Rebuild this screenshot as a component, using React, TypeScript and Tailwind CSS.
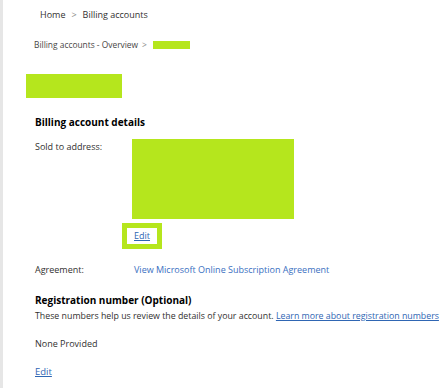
import React from 'react';

const font = { fontFamily: '"Open Sans", "Noto Sans", sans-serif' };

export default function App() {
  return (
    <div className="flex h-[388px] w-[443px] overflow-hidden bg-white text-[#323130]" style={font}>
      <div className="w-[3px] shrink-0 bg-[#e6e6e6]" />
      <div className="flex-1 pl-[23px]">
        {/* breadcrumb */}
        <div className="mt-[8px] flex items-center pl-[14px] text-[9px] leading-[14px] text-[#323130]">
          <span>Home</span>
          <span className="mx-[6px] text-[#8a8886]">&gt;</span>
          <span>Billing accounts</span>
        </div>
        <div className="mt-[16px] flex items-center pl-[8px] text-[8.4px] leading-[14px] text-[#484644]">
          <span>Billing accounts - Overview</span>
          <span className="ml-[4px] text-[#8a8886]">&gt;</span>
          <span className="ml-[6px] h-[8px] w-[37px] bg-[#b5e61d]" />
        </div>
        <div className="mt-[22px] h-[24px] w-[96px] bg-[#b5e61d]" />

        <div className="pl-[9px]">
          <div className="mt-[17px] text-[10px] font-bold leading-[14px] text-black">Billing account details</div>
          <div className="mt-[10px] flex">
            <div className="w-[97px] pt-[2px] text-[9px] leading-[12px]">Sold to address:</div>
            <div className="h-[80px] w-[162px] bg-[#b5e61d]" />
          </div>
          <div className="ml-[87px] mt-[4px] inline-flex border-[5px] border-[#b5e61d] bg-white px-[7px] py-[2px]">
            <span className="text-[9px] leading-[12px] text-[#2f66b3] underline">Edit</span>
          </div>

          <div className="mt-[14px] flex text-[9px] leading-[14px]">
            <div className="w-[99px]">Agreement:</div>
            <span className="text-[#3a6fbf]">View Microsoft Online Subscription Agreement</span>
          </div>

          <div className="mt-[16px] text-[10px] font-bold leading-[14px] text-black">Registration number (Optional)</div>
          <div className="mt-[2px] whitespace-nowrap text-[8.8px] leading-[14px]">
            These numbers help us review the details of your account.{' '}
            <span className="text-[#2f66b3] underline">Learn more about registration numbers</span>
          </div>
          <div className="mt-[14px] text-[9px] leading-[14px]">None Provided</div>
          <div className="mt-[14px] text-[9.5px] leading-[14px] text-[#2f66b3] underline">Edit</div>
        </div>
      </div>
    </div>
  );
}
